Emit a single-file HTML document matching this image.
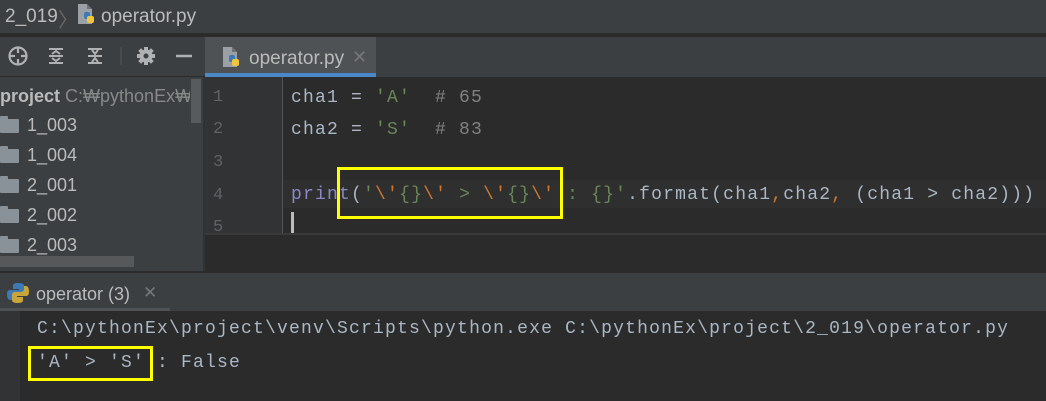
<!DOCTYPE html>
<html><head><meta charset="utf-8"><style>
*{margin:0;padding:0;box-sizing:border-box}
body{width:1046px;height:401px;overflow:hidden;background:#2b2b2b;position:relative;font-family:"Liberation Sans",sans-serif;color:#bbbbbb}
.a{position:absolute}
.mono{font-family:"Liberation Mono",monospace;font-size:18px;letter-spacing:1.2px;color:#a9b7c6;white-space:pre}
.s{color:#6a8759}.e{color:#cc7832}.b{color:#8888c6}.c{color:#808080}
.ln{position:absolute;left:213px;font-family:"Liberation Mono",monospace;font-size:17px;color:#606366}
.fold{position:absolute;left:0;width:19px;height:14px;background:#8a9299;border-radius:1px}
.fold:before{content:"";position:absolute;left:0;top:-3px;width:8px;height:4px;background:#8a9299;border-radius:1px 1px 0 0}
.fn{position:absolute;left:27px;font-size:18px;color:#bbbbbb}
</style></head><body>
<div class="a" style="left:0;top:0;width:1046px;height:35px;background:#3c3f41;border-bottom:2px solid #2b2b2b"></div>
<div class="a" style="left:5px;top:6px;font-size:19px">2_019</div>
<div class="a" style="left:58px;top:4px;font-size:20px;color:#666">〉</div>
<svg class="a" style="left:76px;top:3px" width="22" height="24" viewBox="0 0 22 24"><path d="M2 1h9l5 5v15H2z" fill="#9aa0a5"/><path d="M11 1v5h5" fill="#6e7275"/><rect x="8" y="9" width="6" height="7" rx="2" fill="#3d7ab5"/><rect x="11" y="13" width="7" height="7" rx="2" fill="#f0c63a"/></svg>
<div class="a" style="left:101px;top:6px;font-size:19px">operator.py</div>
<div class="a" style="left:0;top:37px;width:205px;height:39px;background:#3c3f41"></div>
<svg class="a" style="left:6px;top:44px" width="200" height="24" viewBox="0 0 200 24" fill="none" stroke="#afb1b3" stroke-width="2.2">
<circle cx="12" cy="12" r="8.5"/><path d="M12 3v6M12 15v6M3 12h6M15 12h6"/>
<path d="M43 5h14M43 19h14M46 10l4-3 4 3M46 14l4 3 4-3M43 12h14" stroke-width="2"/>
<path d="M82 5h14M82 19h14M86 6l3 4 3-4M86 18l3-4 3 4M82 12h14" stroke-width="2"/>
<path d="M115 3v18" stroke="#555" stroke-width="1"/>
<g fill="#afb1b3" stroke="none"><circle cx="140" cy="12" r="6.5"/>
<rect x="138" y="3" width="4" height="18"/><rect x="131" y="10" width="18" height="4"/>
<rect x="138" y="3" width="4" height="18" transform="rotate(45 140 12)"/><rect x="138" y="3" width="4" height="18" transform="rotate(-45 140 12)"/></g>
<circle cx="140" cy="12" r="2.5" fill="#3c3f41" stroke="none"/>
<path d="M170 12h16" stroke-width="2.5"/>
</svg>
<div class="a" style="left:205px;top:37px;width:841px;height:40px;background:#3c3f41"></div>
<div class="a" style="left:205px;top:37px;width:171px;height:40px;background:#4e5254;border-bottom:4px solid #4a88c7"></div>
<svg class="a" style="left:221px;top:46px" width="22" height="24" viewBox="0 0 22 24"><path d="M2 1h9l5 5v15H2z" fill="#9aa0a5"/><path d="M11 1v5h5" fill="#6e7275"/><rect x="8" y="9" width="6" height="7" rx="2" fill="#3d7ab5"/><rect x="11" y="13" width="7" height="7" rx="2" fill="#f0c63a"/></svg>
<div class="a" style="left:249px;top:48px;font-size:19px">operator.py</div>
<div class="a" style="left:352px;top:47px;font-size:18px;color:#777">✕</div>
<div class="a" style="left:0;top:77px;width:204px;height:194px;background:#3c3f41"></div>
<div class="a" style="left:203px;top:77px;width:2px;height:194px;background:#323232"></div>
<div class="a" style="left:0;top:86px;font-size:18px;white-space:nowrap;width:190px;overflow:hidden"><b style="color:#bbb">project</b> <span style="color:#888">C:₩pythonEx₩pro</span></div>
<div class="a" style="left:191px;top:79px;width:10px;height:44px;background:#585b5d"></div>
<div class="fold" style="top:119px"></div><div class="fn" style="top:115px">1_003</div>
<div class="fold" style="top:149px"></div><div class="fn" style="top:145px">1_004</div>
<div class="fold" style="top:179px"></div><div class="fn" style="top:175px">2_001</div>
<div class="fold" style="top:209px"></div><div class="fn" style="top:205px">2_002</div>
<div class="fold" style="top:239px"></div><div class="fn" style="top:235px">2_003</div>
<div class="a" style="left:0;top:256px;width:134px;height:11px;background:#565859"></div>
<div class="a" style="left:205px;top:77px;width:77px;height:157px;background:#313335"></div>
<div class="a" style="left:282px;top:77px;width:1px;height:157px;background:#555"></div>
<div class="a" style="left:283px;top:180px;width:763px;height:28px;background:#2f2f2f"></div>
<div class="a" style="left:205px;top:233px;width:841px;height:2px;background:#3a3a3a"></div>
<div class="ln" style="top:88px">1</div>
<div class="ln" style="top:120px">2</div>
<div class="ln" style="top:153px">3</div>
<div class="ln" style="top:186px">4</div>
<div class="ln" style="top:218px">5</div>
<div class="a mono" style="left:291px;top:88px">cha1 = <span class="s">'A'</span>  <span class="c"># 65</span></div>
<div class="a mono" style="left:291px;top:120px">cha2 = <span class="s">'S'</span>  <span class="c"># 83</span></div>
<div class="a mono" style="left:291px;top:185px"><span class="b">print</span>(<span class="s">'</span><span class="e">\'</span><span class="s">{}</span><span class="e">\'</span><span class="s"> &gt; </span><span class="e">\'</span><span class="s">{}</span><span class="e">\'</span><span class="s"> : {}'</span>.format(cha1<span class="e">,</span>cha2<span class="e">,</span> (cha1 &gt; cha2)))</div>
<div class="a" style="left:291px;top:212px;width:3px;height:21px;background:#bbb"></div>
<div class="a" style="left:337px;top:167px;width:226px;height:52px;border:3px solid #ffff00"></div>
<div class="a" style="left:0;top:271px;width:1046px;height:2px;background:#2b2b2b"></div>
<div class="a" style="left:0;top:273px;width:1046px;height:38px;background:#3c3f41"></div>
<div class="a" style="left:0;top:308px;width:170px;height:3px;background:#4e5254"></div>
<svg class="a" style="left:7px;top:282px" width="22" height="22" viewBox="0 0 22 22"><path d="M11 1c-5 0-5 2-5 3v3h6v1H3C0 8 0 11 0 13s1 5 3 5h2v-3c0-2 2-3 4-3h5c2 0 3-1 3-3V4c0-2-2-3-6-3z" fill="#3d7ab5"/><path d="M11 21c5 0 5-2 5-3v-3h-6v-1h9c3 0 3-3 3-5s-1-5-3-5h-2v3c0 2-2 3-4 3H8c-2 0-3 1-3 3v5c0 2 2 3 6 3z" fill="#c8a53a"/></svg>
<div class="a" style="left:36px;top:284px;font-size:18px">operator (3)</div>
<div class="a" style="left:143px;top:283px;font-size:17px;color:#777">✕</div>
<div class="a" style="left:0;top:311px;width:20px;height:90px;background:#313335"></div>
<div class="a mono" style="left:37px;top:319px">C:\pythonEx\project\venv\Scripts\python.exe C:\pythonEx\project\2_019\operator.py</div>
<div class="a mono" style="left:37px;top:353px">'A' &gt; 'S' : False</div>
<div class="a" style="left:28px;top:346px;width:125px;height:35px;border:3px solid #ffff00"></div>
</body></html>
